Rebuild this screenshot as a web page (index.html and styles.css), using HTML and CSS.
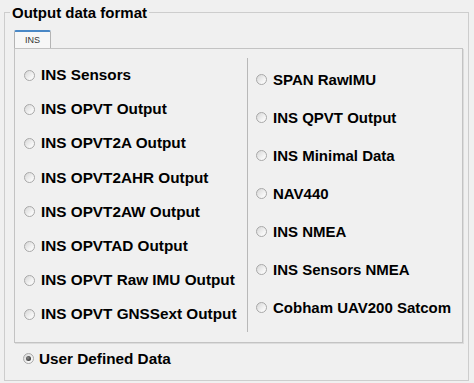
FILE: index.html
```html
<!DOCTYPE html>
<html>
<head>
<meta charset="utf-8">
<link rel="stylesheet" href="styles.css">
</head>
<body>
<fieldset class="group">
  <legend class="group-title">Output data format</legend>
  <div class="tabs">
    <div class="tab">INS</div>
  </div>
  <div class="panel">
    <div class="col col-left">
      <div class="opt"><span class="radio"></span><span class="lbl">INS Sensors</span></div>
      <div class="opt"><span class="radio"></span><span class="lbl">INS OPVT Output</span></div>
      <div class="opt"><span class="radio"></span><span class="lbl">INS OPVT2A Output</span></div>
      <div class="opt"><span class="radio"></span><span class="lbl">INS OPVT2AHR Output</span></div>
      <div class="opt"><span class="radio"></span><span class="lbl">INS OPVT2AW Output</span></div>
      <div class="opt"><span class="radio"></span><span class="lbl">INS OPVTAD Output</span></div>
      <div class="opt"><span class="radio"></span><span class="lbl">INS OPVT Raw IMU Output</span></div>
      <div class="opt"><span class="radio"></span><span class="lbl">INS OPVT GNSSext Output</span></div>
    </div>
    <div class="col col-right">
      <div class="opt"><span class="radio"></span><span class="lbl">SPAN RawIMU</span></div>
      <div class="opt"><span class="radio"></span><span class="lbl">INS QPVT Output</span></div>
      <div class="opt"><span class="radio"></span><span class="lbl">INS Minimal Data</span></div>
      <div class="opt"><span class="radio"></span><span class="lbl">NAV440</span></div>
      <div class="opt"><span class="radio"></span><span class="lbl">INS NMEA</span></div>
      <div class="opt"><span class="radio"></span><span class="lbl">INS Sensors NMEA</span></div>
      <div class="opt"><span class="radio"></span><span class="lbl">Cobham UAV200 Satcom</span></div>
    </div>
  </div>
  <div class="opt user"><span class="radio checked"></span><span class="lbl">User Defined Data</span></div>
</fieldset>
</body>
</html>
```
FILE: styles.css
```css
html, body {
  margin: 0;
  padding: 0;
  background: #f0f0f0;
}
body {
  padding-top: 4px;
  font-family: "Liberation Sans", Arial, sans-serif;
  color: #000;
}
.group {
  margin: 0 5px 0 4px;
  padding: 0 0 11px 0;
  border: 1px solid #cdcdcd;
  min-inline-size: 0;
}
.group-title {
  margin-left: 5px;
  padding: 0 2px;
  font-size: 15px;
  font-weight: bold;
  line-height: 17px;
  color: #000;
}
.tabs {
  display: flex;
  margin: 9px 0 0 9px;
}
.tab {
  width: 35px;
  height: 16px;
  border: 1px solid #b4b4b4;
  border-top: 2px solid #4a88c6;
  border-bottom: none;
  border-radius: 2px 2px 0 0;
  background: #f7f7f7;
  font-size: 9px;
  line-height: 16px;
  text-align: center;
  color: #333;
}
.panel {
  display: flex;
  margin: 0 5px 0 9px;
  padding: 9px 0 10px 0;
  border: 1px solid #c3c3c3;
  box-shadow: 1px 1px 0 #dcdcdc;
  background: #f0f0f0;
}
.col {
  display: grid;
  align-content: start;
}
.col-left {
  width: 223px;
  padding-left: 9px;
  grid-auto-rows: 34.2px;
}
.col-right {
  flex: 1;
  padding: 2px 0 0 8px;
  border-left: 1px solid #b8b8b8;
  grid-auto-rows: 38px;
}
.opt {
  display: flex;
  align-items: center;
  gap: 6px;
}
.lbl {
  font-size: 15.3px;
  font-weight: bold;
  white-space: nowrap;
}
.col-right .lbl {
  font-size: 15px;
}
.radio {
  flex: none;
  box-sizing: border-box;
  width: 11px;
  height: 11px;
  border: 1px solid #a8a8a8;
  border-radius: 50%;
  background: linear-gradient(135deg, #d6d6d6 0%, #f2f2f2 60%, #ffffff 100%);
  display: flex;
  align-items: center;
  justify-content: center;
}
.radio.checked::after {
  content: "";
  width: 5px;
  height: 5px;
  border-radius: 50%;
  background: radial-gradient(circle at 40% 40%, #8a8a8a 0%, #3a3a3a 70%, #2a2a2a 100%);
}
.user {
  margin-top: 6px;
  padding-left: 18px;
  height: 20px;
  gap: 5px;
}
```
